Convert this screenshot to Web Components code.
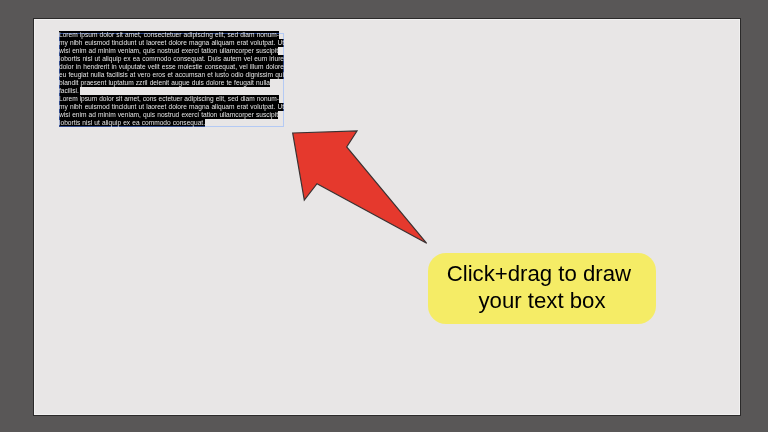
<!DOCTYPE html>
<html><head><meta charset="utf-8"><style>
html,body{margin:0;padding:0;width:768px;height:432px;overflow:hidden;background:#595757}
</style></head><body>
<app-stage>
  <art-board>
    <text-frame>
<sel-line w="220">Lorem ipsum dolor sit amet, consectetuer adipiscing elit, sed diam nonum-</sel-line>
<sel-line w="225">my nibh euismod tincidunt ut laoreet dolore magna aliquam erat volutpat. Ut</sel-line>
<sel-line w="219">wisi enim ad minim veniam, quis nostrud exerci tation ullamcorper suscipit</sel-line>
<sel-line w="225">lobortis nisl ut aliquip ex ea commodo consequat. Duis autem vel eum iriure</sel-line>
<sel-line w="225">dolor in hendrerit in vulputate velit esse molestie consequat, vel illum dolore</sel-line>
<sel-line w="225">eu feugiat nulla facilisis at vero eros et accumsan et iusto odio dignissim qui</sel-line>
<sel-line w="211">blandit praesent luptatum zzril delenit augue duis dolore te feugait nulla</sel-line>
<sel-line w="21">facilisi.</sel-line>
<sel-line w="220">Lorem ipsum dolor sit amet, cons ectetuer adipiscing elit, sed diam nonum-</sel-line>
<sel-line w="225">my nibh euismod tincidunt ut laoreet dolore magna aliquam erat volutpat. Ut</sel-line>
<sel-line w="219">wisi enim ad minim veniam, quis nostrud exerci tation ullamcorper suscipit</sel-line>
<sel-line w="146">lobortis nisl ut aliquip ex ea commodo consequat.</sel-line>
    </text-frame>
    <red-arrow></red-arrow>
    <call-out>Click+drag to draw&nbsp;<br>your text box</call-out>
  </art-board>
</app-stage>
<script>
function def(name, html, init){
  customElements.define(name, class extends HTMLElement{
    constructor(){super();this.attachShadow({mode:'open'}).innerHTML=html;}
    connectedCallback(){ if(init) init(this); }
  });
}
def('app-stage',`<style>:host{display:block;width:768px;height:432px;box-sizing:border-box;padding:18px 27px 16px 33px}</style><slot></slot>`);
def('art-board',`<style>:host{display:block;position:relative;width:708px;height:398px;box-sizing:border-box;background:#e8e6e6;border:1px solid #2b2a2a;padding:12px 0 0 25px;box-shadow:inset 0 0 0 1px #f1f0f0}</style><slot></slot>`);
def('text-frame',`<style>:host{display:flex;flex-direction:column;position:relative;width:225px;height:96px;box-sizing:border-box;font:6.6px/8px "Liberation Sans",Arial,sans-serif;color:#e8e8e8;isolation:isolate}
.b{position:absolute;left:0;top:2px;width:225px;height:94px;box-sizing:border-box;border:1px solid #a3b5e6;pointer-events:none}
.under{z-index:0}
.over{z-index:2;border-color:#2f4a8c;mix-blend-mode:screen}
::slotted(sel-line){position:relative;z-index:1}</style><div class="b under"></div><slot></slot><div class="b over"></div>`);
def('sel-line',`<style>:host{display:block;height:8px;background:#000;white-space:normal;overflow:hidden}
span{display:block;text-align:justify;text-align-last:justify;filter:blur(.3px);opacity:.98}</style><span><slot></slot></span>`,el=>{
  el.style.width=el.getAttribute('w')+'px';
  if(el.getAttribute('w')=='146'||el.getAttribute('w')=='21') el.style.whiteSpace='nowrap';
});
def('red-arrow',`<style>:host{display:block;position:absolute;left:-33px;top:-18px;width:768px;height:432px;pointer-events:none}svg{display:block}</style>
<svg width="768" height="432" viewBox="0 0 768 432"><polygon points="291.7,132 356,130 345.7,146 425.7,242.3 316,182.7 303.3,199" fill="#e5392d" stroke="#3a3232" stroke-width="1.2" stroke-linejoin="miter"/></svg>`);
def('call-out',`<style>:host{display:flex;align-items:center;justify-content:center;text-align:center;position:absolute;left:394px;top:234px;width:228px;height:71px;box-sizing:border-box;padding-bottom:4px;border-radius:18px;background:#f5ec66;color:#000;font:22.2px/27px "Liberation Sans",Arial,sans-serif}
div{filter:blur(.3px)}</style><div><slot></slot></div>`);
</script>
</body></html>
